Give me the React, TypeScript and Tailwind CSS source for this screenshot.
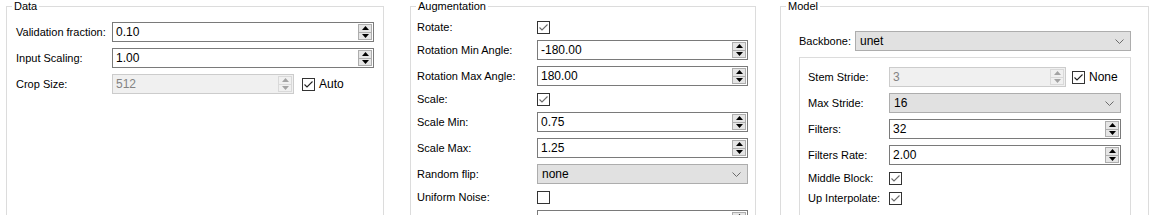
import React from "react";

// Qt-style settings form: three group boxes side by side.

function Tri({ up, color }: { up: boolean; color: string }) {
  return (
    <svg width="7" height="4" viewBox="0 0 7 4" aria-hidden>
      <path d={up ? "M0 4 L3.5 0 L7 4 Z" : "M0 0 L3.5 4 L7 0 Z"} fill={color} />
    </svg>
  );
}

function Spin({
  value,
  disabled = false,
  className = "",
}: {
  value: string;
  disabled?: boolean;
  className?: string;
}) {
  const arrow = disabled ? "#a3a3a3" : "#000000";
  return (
    <div
      className={`flex h-[20px] items-stretch border ${
        disabled
          ? "border-[#cccccc] bg-[#f0f0f0] text-[#838383]"
          : "border-[#7a7a7a] bg-white text-black"
      } ${className}`}
    >
      <span className="flex flex-1 items-center pl-[3px] text-[12px] leading-none">
        {value}
      </span>
      <div
        className={`my-[1px] mr-[1px] flex w-[14px] flex-col border ${
          disabled ? "border-[#d9d9d9] bg-[#f0f0f0]" : "border-[#adadad] bg-[#e5e5e5]"
        }`}
      >
        <div className="flex flex-1 items-center justify-center">
          <Tri up color={arrow} />
        </div>
        <div
          className={`flex flex-1 items-center justify-center border-t ${
            disabled ? "border-[#d9d9d9]" : "border-[#adadad]"
          }`}
        >
          <Tri up={false} color={arrow} />
        </div>
      </div>
    </div>
  );
}

function Combo({ value, className = "" }: { value: string; className?: string }) {
  return (
    <div
      className={`flex h-[20px] items-center justify-between border border-[#adadad] bg-[#e1e1e1] pl-[4px] pr-[6px] ${className}`}
    >
      <span className="text-[12px] leading-none text-black">{value}</span>
      <svg width="9" height="5" viewBox="0 0 9 5" fill="none" aria-hidden>
        <path d="M0.5 0.5 L4.5 4.5 L8.5 0.5" stroke="#6b6b6b" strokeWidth="1" />
      </svg>
    </div>
  );
}

function Check({ checked, dark = false }: { checked: boolean; dark?: boolean }) {
  return (
    <svg width="13" height="13" viewBox="0 0 13 13" fill="none" aria-hidden className="shrink-0">
      <rect x="0.5" y="0.5" width="12" height="12" fill="white" stroke="#333333" />
      {checked && (
        <path
          d="M2.5 6.5 L5 9 L10.5 3.5"
          stroke={dark ? "#222222" : "#6a6a6a"}
          strokeWidth="1.1"
        />
      )}
    </svg>
  );
}

function Label({ children }: { children: React.ReactNode }) {
  return <span className="whitespace-nowrap text-[11px] leading-none text-black">{children}</span>;
}

function GroupBox({
  title,
  className,
  children,
}: {
  title?: string;
  className: string;
  children: React.ReactNode;
}) {
  return (
    <div className={`relative h-[240px] shrink-0 border border-[#dcdcdc] ${className}`}>
      {title && (
        <span className="absolute left-[5px] top-[-7px] bg-white px-[2px] text-[11px] leading-[13px] text-black">
          {title}
        </span>
      )}
      {children}
    </div>
  );
}

export default function App() {
  return (
    <div className="h-[215px] w-[1156px] overflow-hidden bg-white pl-[6px] pt-[6px] font-['Liberation_Sans',Arial,sans-serif]">
      <div className="flex">
        {/* Data */}
        <GroupBox title="Data" className="w-[378px] pl-[9px] pr-[9px] pt-[15px]">
          <div className="grid grid-cols-[96px_1fr] items-center gap-y-[6px]">
            <Label>Validation fraction:</Label>
            <Spin value="0.10" />
            <Label>Input Scaling:</Label>
            <Spin value="1.00" />
            <Label>Crop Size:</Label>
            <div className="flex items-center">
              <Spin value="512" disabled className="w-[182px]" />
              <span className="ml-[8px]">
                <Check checked dark />
              </span>
              <span className="ml-[4px] text-[12px] leading-none">Auto</span>
            </div>
          </div>
        </GroupBox>

        {/* Augmentation */}
        <GroupBox title="Augmentation" className="ml-[26px] w-[346px] pl-[6px] pr-[7px] pt-[13px]">
          <div className="grid grid-cols-[120px_1fr] items-center gap-y-[6px]">
            <Label>Rotate:</Label>
            <div className="flex h-[14px] items-end">
              <Check checked />
            </div>
            <Label>Rotation Min Angle:</Label>
            <Spin value="-180.00" />
            <Label>Rotation Max Angle:</Label>
            <Spin value="180.00" />
            <Label>Scale:</Label>
            <div className="flex h-[14px] items-center">
              <Check checked />
            </div>
            <Label>Scale Min:</Label>
            <Spin value="0.75" />
            <Label>Scale Max:</Label>
            <Spin value="1.25" />
            <Label>Random flip:</Label>
            <Combo value="none" />
            <Label>Uniform Noise:</Label>
            <div className="flex h-[14px] items-center">
              <Check checked={false} />
            </div>
            {/* next row is clipped by the window edge: only its top border shows */}
            <span />
            <Spin value="" />
          </div>
        </GroupBox>

        {/* Model */}
        <GroupBox title="Model" className="ml-[24px] w-[369px] pl-[18px] pr-[17px] pt-[24px]">
          <div className="grid grid-cols-[56px_1fr] items-center">
            <Label>Backbone:</Label>
            <Combo value="unet" />
          </div>
          <div className="mt-[6px] h-[200px] border border-[#dcdcdc] pl-[8px] pr-[9px] pt-[9px]">
            <div className="grid grid-cols-[81px_1fr] items-center gap-y-[6px]">
              <Label>Stem Stride:</Label>
              <div className="flex items-center">
                <Spin value="3" disabled className="w-[177px]" />
                <span className="ml-[6px]">
                  <Check checked dark />
                </span>
                <span className="ml-[4px] text-[12px] leading-none">None</span>
              </div>
              <Label>Max Stride:</Label>
              <Combo value="16" />
              <Label>Filters:</Label>
              <Spin value="32" />
              <Label>Filters Rate:</Label>
              <Spin value="2.00" />
              <Label>Middle Block:</Label>
              <div className="flex h-[14px] items-center">
                <Check checked />
              </div>
              <Label>Up Interpolate:</Label>
              <div className="flex h-[14px] items-center">
                <Check checked />
              </div>
            </div>
          </div>
        </GroupBox>
      </div>
    </div>
  );
}
